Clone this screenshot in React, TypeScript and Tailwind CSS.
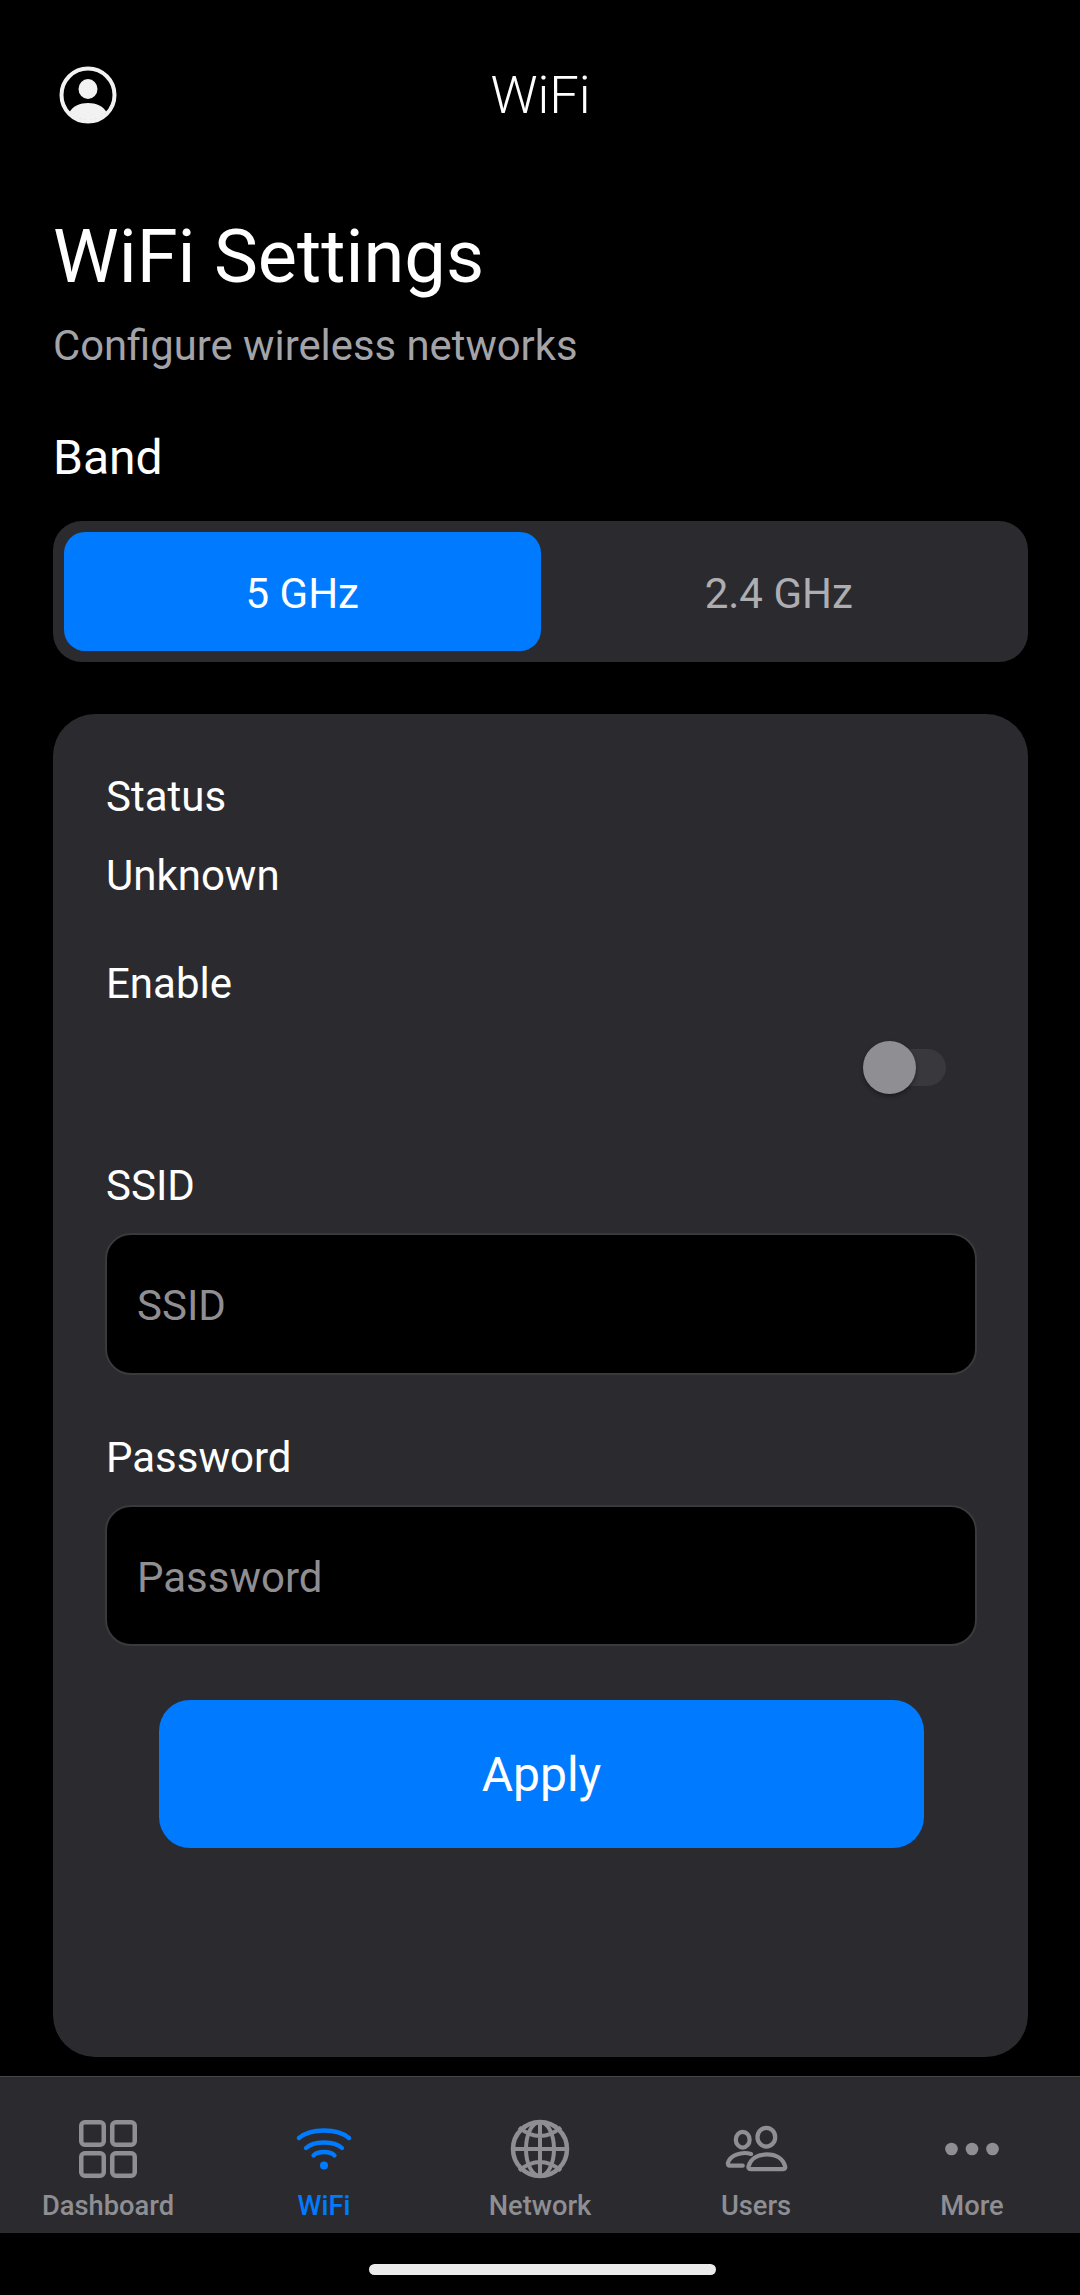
import React from "react";

function Tab({ label, active, children }: { label: string; active?: boolean; children: React.ReactNode }) {
  return (
    <div className={`flex flex-1 flex-col items-center pt-[40px] ${active ? "text-[#007aff]" : "text-[#8e8e93]"}`}>
      <div className="flex h-[63px] w-[63px] items-center justify-center">{children}</div>
      <span className="mt-[9px] text-[27.3px] leading-[34px] font-medium">{label}</span>
    </div>
  );
}

function Field({ label, top, height }: { label: string; top: string; height: string }) {
  return (
    <div className={`-ml-[1px] ${top}`}>
      <div className="pl-[1px] text-[42px] leading-[50px] text-white">{label}</div>
      <div className={`mt-[22px] flex items-center rounded-[26px] border-[2px] border-[#3a3a3c] bg-black px-[30px] pt-[4px] ${height}`}>
        <span className="text-[42px] leading-[50px] text-[#8e8e93]">{label}</span>
      </div>
    </div>
  );
}

export default function App() {
  return (
    <div className="flex h-[2295px] w-[1080px] flex-col overflow-hidden bg-black font-['Roboto',sans-serif] text-white">
      <div className="pl-[53px] pr-[52px] pt-[53px]">
        <div className="relative flex h-[84px] items-center justify-center">
          <svg className="absolute left-[6px] top-[13px]" width="58" height="58" viewBox="0 0 58 58" fill="none">
            <circle cx="29" cy="29" r="26.5" stroke="#f2f2f2" strokeWidth="4" />
            <ellipse cx="29" cy="23" rx="9.5" ry="10" fill="#f2f2f2" />
            <path d="M10.5 46C14 40 21 37 29 37S44 40 47.5 46A25 25 0 0 1 10.5 46Z" fill="#f2f2f2" />
          </svg>
          <span className="text-[52.5px] leading-[56px] font-light text-white">WiFi</span>
        </div>
        <h1 className="mt-[76px] text-[74px] leading-[88px] font-normal">WiFi Settings</h1>
        <p className="mt-[20px] text-[41.8px] leading-[50px] text-[#a3a3a8]">Configure wireless networks</p>
        <div className="mt-[62px] text-[48px] leading-[50px]">Band</div>

        <div className="mt-[38px] flex h-[141px] rounded-[29px] bg-[#2b2b2f] p-[11px]">
          <div className="flex flex-1 items-center justify-center rounded-[21px] bg-[#007aff] pt-[3px] text-[42px] text-white">5 GHz</div>
          <div className="flex flex-1 items-center justify-center pt-[3px] text-[42px] text-[#aeaeb2]">2.4 GHz</div>
        </div>

        <div className="mt-[52px] h-[1343px] rounded-[42px] bg-[#2b2b2f] pl-[53px] pr-[51px] pt-[58px]">
          <div className="text-[42px] leading-[50px]">Status</div>
          <div className="mt-[29px] text-[42px] leading-[50px]">Unknown</div>
          <div className="mt-[58px] text-[42px] leading-[50px]">Enable</div>
          <div className="mt-[32px] flex h-[53px] justify-end pr-[31px]">
            <div className="relative mt-[8px] h-[37px] w-[78px] rounded-full bg-[#39393d]">
              <div className="absolute top-[-8px] left-[-5px] h-[53px] w-[53px] rounded-full bg-[#8e8e93] shadow-[0_2px_4px_rgba(0,0,0,0.4)]" />
            </div>
          </div>
          <Field label="SSID" top="mt-[67px]" height="h-[142px]" />
          <Field label="Password" top="mt-[58px]" height="h-[141px]" />
          <div className="mt-[54px] flex justify-center">
            <div className="flex h-[148px] w-[765px] items-center justify-center rounded-[31px] bg-[#007aff] pt-[2px] text-[48px] font-normal text-white">Apply</div>
          </div>
        </div>
      </div>

      <div className="mt-[19px] flex h-[157px] border-t border-[#48484a] bg-[#2b2b2f]">
        <Tab label="Dashboard">
          <svg width="58" height="58" viewBox="0 0 58 58" fill="none" stroke="currentColor" strokeWidth="4.500">
            <rect x="2.250" y="2.250" width="22.500" height="22.500" rx="3.500" />
            <rect x="33.250" y="2.250" width="22.500" height="22.500" rx="3.500" />
            <rect x="2.250" y="33.250" width="22.500" height="22.500" rx="3.500" />
            <rect x="33.250" y="33.250" width="22.500" height="22.500" rx="3.500" />
          </svg>
        </Tab>
        <Tab label="WiFi" active>
          <svg width="56" height="44" viewBox="0 0 56 44" fill="none" stroke="currentColor" strokeWidth="4.300" strokeLinecap="round">
            <path d="M3 11C15 1 41 1 53 11" />
            <path d="M10 21C18 13.670 38 13.670 46 21" />
            <path d="M17.500 28.500C22 23.800 34 23.800 38.500 28.500" />
            <circle cx="28" cy="38.500" r="4" fill="currentColor" stroke="none" />
          </svg>
        </Tab>
        <Tab label="Network">
          <svg width="60" height="60" viewBox="0 0 60 60" fill="none" stroke="currentColor" strokeWidth="4">
            <circle cx="30" cy="30" r="27" strokeWidth="4.500" />
            <ellipse cx="30" cy="30" rx="14" ry="27" />
            <path d="M30 3v54M3 30h54M9 8.500Q30 25.500 51 8.500M9 51.500Q30 34.500 51 51.500" />
          </svg>
        </Tab>
        <Tab label="Users">
          <svg width="64" height="50" viewBox="0 0 64 50" fill="none" stroke="currentColor" strokeWidth="4.300" strokeLinecap="round" strokeLinejoin="round">
            <ellipse cx="18" cy="15.500" rx="7" ry="8" />
            <ellipse cx="42" cy="13" rx="9" ry="9.500" />
            <path d="M26.500 30C16 27 5 32 3 39C2.500 41 3.500 42 5 42H18" />
            <path d="M26 45.500C24 45.500 23.500 44 24 42.500C26 35 33 30.500 42.500 30.500S59 35 61 42.500C61.500 44 61 45.500 59 45.500Z" />
          </svg>
        </Tab>
        <Tab label="More">
          <svg width="56" height="14" viewBox="0 0 56 14" fill="currentColor">
            <circle cx="7.500" cy="7" r="6.300" />
            <circle cx="28" cy="7" r="6.300" />
            <circle cx="48.500" cy="7" r="6.300" />
          </svg>
        </Tab>
      </div>

      <div className="flex flex-1 justify-center pt-[31px]">
        <div className="ml-[5px] h-[11px] w-[347px] rounded-full bg-[#ebebeb]" />
      </div>
    </div>
  );
}
